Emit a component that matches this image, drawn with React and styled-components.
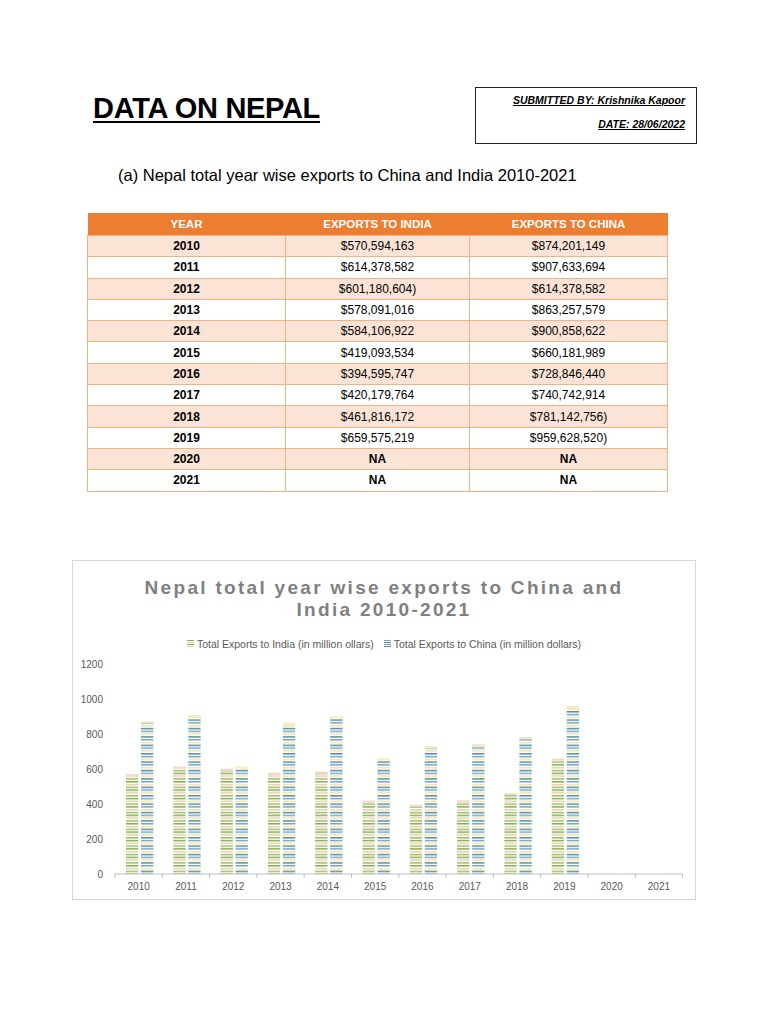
import React from 'react';
import styled, { createGlobalStyle } from 'styled-components';

const ROWS = [
  ['2010', '$570,594,163', '$874,201,149'],
  ['2011', '$614,378,582', '$907,633,694'],
  ['2012', '$601,180,604)', '$614,378,582'],
  ['2013', '$578,091,016', '$863,257,579'],
  ['2014', '$584,106,922', '$900,858,622'],
  ['2015', '$419,093,534', '$660,181,989'],
  ['2016', '$394,595,747', '$728,846,440'],
  ['2017', '$420,179,764', '$740,742,914'],
  ['2018', '$461,816,172', '$781,142,756)'],
  ['2019', '$659,575,219', '$959,628,520)'],
  ['2020', 'NA', 'NA'],
  ['2021', 'NA', 'NA'],
];

const SERIES = [
  { year: '2010', india: 570.6, china: 874.2 },
  { year: '2011', india: 614.4, china: 907.6 },
  { year: '2012', india: 601.2, china: 614.4 },
  { year: '2013', india: 578.1, china: 863.3 },
  { year: '2014', india: 584.1, china: 900.9 },
  { year: '2015', india: 419.1, china: 660.2 },
  { year: '2016', india: 394.6, china: 728.8 },
  { year: '2017', india: 420.2, china: 740.7 },
  { year: '2018', india: 461.8, china: 781.1 },
  { year: '2019', india: 659.6, china: 959.6 },
  { year: '2020', india: 0, china: 0 },
  { year: '2021', india: 0, china: 0 },
];

// plot geometry, in svg coordinates
const X0 = 42;
const CAT = 47.3;
const Y0 = 219;
const SCALE = 0.175;

const GlobalStyle = createGlobalStyle`
  body {
    margin: 0;
    background: #fff;
    font-family: "Liberation Sans", Arial, sans-serif;
    color: #000;
  }
`;

export default function App() {
  return (
    <Page>
      <GlobalStyle />
      <Header>
        <Title>DATA ON NEPAL</Title>
        <SubmitBox>
          <SubmitLine>SUBMITTED BY: Krishnika Kapoor</SubmitLine>
          <SubmitLine>DATE: 28/06/2022</SubmitLine>
        </SubmitBox>
      </Header>

      <SubHeading>(a) Nepal total year wise exports to China and India 2010-2021</SubHeading>

      <Table>
        <thead>
          <tr>
            <HeadCell>YEAR</HeadCell>
            <HeadCell>EXPORTS TO INDIA</HeadCell>
            <HeadCell>EXPORTS TO CHINA</HeadCell>
          </tr>
        </thead>
        <tbody>
          {ROWS.map((row, i) => (
            <Row key={row[0]} $shaded={i % 2 === 0}>
              <Cell $bold>{row[0]}</Cell>
              <Cell $bold={row[1] === 'NA'}>{row[1]}</Cell>
              <Cell $bold={row[2] === 'NA'}>{row[2]}</Cell>
            </Row>
          ))}
        </tbody>
      </Table>

      <ChartCard>
        <ChartTitle>
          Nepal total year wise exports to China and
          <br />
          India 2010-2021
        </ChartTitle>
        <Legend>
          <LegendItem>
            <Swatch $kind="india" />
            Total Exports to India (in million ollars)
          </LegendItem>
          <LegendItem>
            <Swatch $kind="china" />
            Total Exports to China (in million dollars)
          </LegendItem>
        </Legend>
        <PlotSvg width="622" height="242">
          <defs>
            <pattern id="indiaStripe" width="6" height="8.4" patternUnits="userSpaceOnUse">
              <rect width="6" height="8.4" fill="#fff" />
              <rect y="0" width="6" height="1.5" fill="#86ad4c" />
              <rect y="2.8" width="6" height="1.5" fill="#e3d2a6" />
              <rect y="5.6" width="6" height="1.5" fill="#9fba6c" />
            </pattern>
            <pattern id="chinaStripe" width="6" height="8.4" patternUnits="userSpaceOnUse">
              <rect width="6" height="8.4" fill="#fff" />
              <rect y="0" width="6" height="1.5" fill="#6aa8d6" />
              <rect y="2.8" width="6" height="1.5" fill="#f3e3a3" />
              <rect y="5.6" width="6" height="1.5" fill="#5d8c96" />
            </pattern>
          </defs>
          {[0, 200, 400, 600, 800, 1000, 1200].map(v => (
            <text
              key={v}
              x="30"
              y={Y0 - v * SCALE + 3.5}
              textAnchor="end"
              fontSize="10"
              fill="#595959"
              fontFamily="Liberation Sans, Arial, sans-serif"
            >
              {v}
            </text>
          ))}
          {SERIES.map((d, i) => {
            const cx = X0 + i * CAT;
            const hi = d.india * SCALE;
            const hc = d.china * SCALE;
            return (
              <g key={d.year}>
                {hi > 0 && (
                  <>
                    <rect x={cx + 11} y={Y0 - hi} width="12.3" height={hi} fill="url(#indiaStripe)" />
                    <rect x={cx + 11} y={Y0 - hi} width="12.3" height="2" fill="#f1dccd" />
                  </>
                )}
                {hc > 0 && (
                  <>
                    <rect x={cx + 26} y={Y0 - hc} width="12.3" height={hc} fill="url(#chinaStripe)" />
                    <rect x={cx + 26} y={Y0 - hc} width="12.3" height="2" fill="#fbedbd" />
                  </>
                )}
                <text
                  x={cx + CAT / 2}
                  y="235"
                  textAnchor="middle"
                  fontSize="10"
                  fill="#595959"
                  fontFamily="Liberation Sans, Arial, sans-serif"
                >
                  {d.year}
                </text>
              </g>
            );
          })}
          <line x1={X0} y1={Y0} x2={X0 + 12 * CAT} y2={Y0} stroke="#bfbfbf" strokeWidth="1" />
          {Array.from({ length: 13 }).map((_, i) => (
            <line
              key={i}
              x1={X0 + i * CAT}
              y1={Y0}
              x2={X0 + i * CAT}
              y2={Y0 + 4}
              stroke="#bfbfbf"
              strokeWidth="1"
            />
          ))}
        </PlotSvg>
      </ChartCard>
    </Page>
  );
}

const Page = styled.div`
  width: 768px;
  min-height: 1024px;
  padding-top: 87px;
  box-sizing: border-box;
  background: #fff;
`;

const Header = styled.div`
  display: flex;
  align-items: flex-start;
`;

const Title = styled.h1`
  margin: 4px 0 0 93px;
  font-size: 29px;
  font-weight: bold;
  line-height: 34px;
  text-decoration: underline;
  text-decoration-thickness: 2px;
  text-underline-offset: 3px;
  letter-spacing: -0.3px;
`;

const SubmitBox = styled.div`
  display: flex;
  flex-direction: column;
  align-items: flex-end;
  gap: 11px;
  width: 222px;
  height: 57px;
  margin-left: auto;
  margin-right: 71px;
  padding: 6px 11px 0 0;
  box-sizing: border-box;
  border: 1px solid #222;
`;

const SubmitLine = styled.span`
  font-size: 10.5px;
  font-weight: bold;
  font-style: italic;
  line-height: 13px;
  text-decoration: underline;
`;

const SubHeading = styled.p`
  margin: 21px 0 0 118px;
  font-size: 16.5px;
  line-height: 20px;
`;

const Table = styled.table`
  width: 581px;
  margin: 28px 0 0 87px;
  border-collapse: collapse;
  table-layout: fixed;
  font-size: 12px;

  th:nth-child(1),
  td:nth-child(1) {
    width: 198px;
  }

  th:nth-child(2),
  td:nth-child(2) {
    width: 184px;
  }
`;

const HeadCell = styled.th`
  height: 22px;
  padding: 0;
  background: #ed7d31;
  color: #fff;
  font-size: 11.5px;
  font-weight: bold;
  text-align: center;
`;

const Row = styled.tr`
  height: 21.3px;
  background: ${({ $shaded }) => ($shaded ? '#fbe4d5' : '#fff')};
`;

const Cell = styled.td`
  padding: 0;
  border: 1px solid #f4b183;
  text-align: center;
  font-weight: ${({ $bold }) => ($bold ? 'bold' : 'normal')};
`;

const ChartCard = styled.div`
  width: 624px;
  height: 340px;
  margin: 68px 0 0 72px;
  padding-top: 16px;
  box-sizing: border-box;
  border: 1px solid #d9d9d9;
  overflow: hidden;
`;

const ChartTitle = styled.div`
  text-align: center;
  font-size: 19px;
  font-weight: bold;
  line-height: 22px;
  letter-spacing: 2.3px;
  color: #808080;
`;

const Legend = styled.div`
  display: flex;
  justify-content: center;
  gap: 10px;
  margin-top: 16px;
  height: 14px;
  font-size: 10.5px;
  line-height: 14px;
  color: #595959;
`;

const LegendItem = styled.span`
  display: flex;
  align-items: center;
  gap: 3px;
`;

const Swatch = styled.span`
  width: 7px;
  height: 7px;
  background: ${({ $kind }) =>
    $kind === 'india'
      ? 'repeating-linear-gradient(#86ad4c 0 1px, #fff 1px 2px, #e3d2a6 2px 3px, #fff 3px 4px)'
      : 'repeating-linear-gradient(#6aa8d6 0 1px, #fff 1px 2px, #5d8c96 2px 3px, #fff 3px 4px)'};
`;

const PlotSvg = styled.svg`
  display: block;
  margin-top: 4px;
`;
